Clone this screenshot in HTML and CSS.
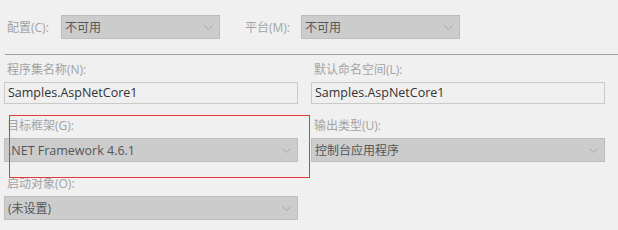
FILE: index.html
```html
<!DOCTYPE html>
<html lang="zh-CN">
<head>
<meta charset="UTF-8" />
<title>项目属性</title>
<link rel="stylesheet" href="styles.css">
</head>
<body>
<div class="page">
  <div class="top-row">
    <span class="label top-label">配置(C):</span>
    <div class="combo top-combo">
      <span>不可用</span>
      <svg class="chev" width="9" height="5" viewBox="0 0 9 5"><polyline points="0.5,0.5 4.5,4.5 8.5,0.5" fill="none" stroke="#a6a6a6" stroke-width="1"/></svg>
    </div>
    <span class="label top-label second">平台(M):</span>
    <div class="combo top-combo">
      <span>不可用</span>
      <svg class="chev" width="9" height="5" viewBox="0 0 9 5"><polyline points="0.5,0.5 4.5,4.5 8.5,0.5" fill="none" stroke="#a6a6a6" stroke-width="1"/></svg>
    </div>
  </div>
  <div class="sep"></div>
  <div class="fields">
    <div class="field">
      <div class="label">程序集名称(N):</div>
      <div class="textbox">Samples.AspNetCore1</div>
    </div>
    <div class="field">
      <div class="label">默认命名空间(L):</div>
      <div class="textbox">Samples.AspNetCore1</div>
    </div>
    <div class="field">
      <div class="label">目标框架(G):</div>
      <div class="combo">
        <span class="latin">.NET Framework 4.6.1</span>
        <svg class="chev" width="9" height="5" viewBox="0 0 9 5"><polyline points="0.5,0.5 4.5,4.5 8.5,0.5" fill="none" stroke="#a6a6a6" stroke-width="1"/></svg>
      </div>
    </div>
    <div class="field">
      <div class="label">输出类型(U):</div>
      <div class="combo">
        <span>控制台应用程序</span>
        <svg class="chev" width="9" height="5" viewBox="0 0 9 5"><polyline points="0.5,0.5 4.5,4.5 8.5,0.5" fill="none" stroke="#a6a6a6" stroke-width="1"/></svg>
      </div>
    </div>
    <div class="field">
      <div class="label">启动对象(O):</div>
      <div class="combo">
        <span>(未设置)</span>
        <svg class="chev" width="9" height="5" viewBox="0 0 9 5"><polyline points="0.5,0.5 4.5,4.5 8.5,0.5" fill="none" stroke="#a6a6a6" stroke-width="1"/></svg>
      </div>
    </div>
  </div>
  <div class="highlight"></div>
</div>
</body>
</html>
```

FILE: styles.css
```css
* {
  box-sizing: border-box;
}
html, body {
  margin: 0;
  padding: 0;
  background: #f0f0f0;
}
body {
  font-family: "Open Sans", "Noto Sans CJK SC", sans-serif;
  font-size: 12px;
  color: #444;
  width: 618px;
  height: 230px;
  overflow: hidden;
}
.page {
  position: relative;
  padding: 15px 0 0 4px;
}
.label {
  color: #a3a3a3;
  line-height: 17px;
  height: 17px;
  white-space: nowrap;
}
.top-row {
  display: flex;
  align-items: center;
  height: 24px;
}
.top-label {
  padding-left: 3px;
  width: 57px;
}
.top-label.second {
  margin-left: 22px;
  width: 59px;
}
.combo {
  display: flex;
  align-items: center;
  justify-content: space-between;
  height: 24px;
  background: #cccccc;
  border: 1px solid #bdbdbd;
  padding: 0 6px 0 3px;
  color: #555;
  white-space: nowrap;
}
.top-combo {
  width: 159px;
}
.chev {
  display: block;
  margin-top: 1px;
}
.sep {
  height: 1px;
  background: #a0a0a0;
  margin: 15px 0 6px 1px;
}
.fields {
  display: grid;
  grid-template-columns: 294px 294px;
  column-gap: 13px;
  row-gap: 13px;
}
.field .label {
  padding-left: 3px;
  margin-bottom: 4px;
}
.textbox {
  height: 22px;
  line-height: 20px;
  border: 1px solid #cacaca;
  background: #efefef;
  padding: 0 3px;
  color: #333;
  font-size: 12.5px;
  white-space: nowrap;
}
.latin {
  font-size: 12.5px;
}
.highlight {
  position: absolute;
  left: 9px;
  top: 115px;
  width: 301px;
  height: 63px;
  border: 1px solid #e0393e;
}
```
